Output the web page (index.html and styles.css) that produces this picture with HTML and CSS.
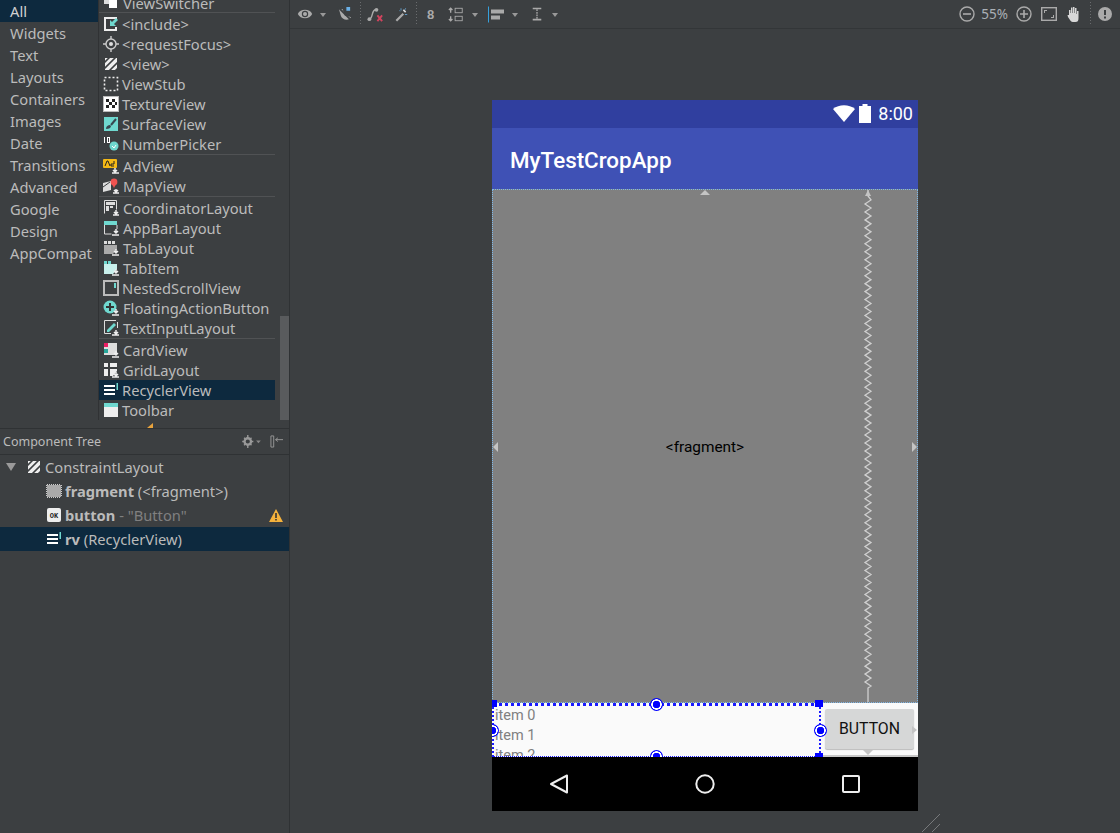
FILE: index.html
```html
<!DOCTYPE html>
<html lang="en">
<head>
<meta charset="utf-8">
<title>MyTestCropApp layout editor</title>
<link rel="stylesheet" href="styles.css">
</head>
<body>
<div class="ide">
  <aside class="side">
    <div class="palette">
      <ul class="cats">
        <li class="cat cat-on">All</li><li class="cat">Widgets</li><li class="cat">Text</li><li class="cat">Layouts</li><li class="cat">Containers</li><li class="cat">Images</li><li class="cat">Date</li><li class="cat">Transitions</li><li class="cat">Advanced</li><li class="cat">Google</li><li class="cat">Design</li><li class="cat">AppCompat</li>
      </ul>
      <div class="list">
        <div class="clip-row"><svg class="ic" viewBox="0 0 16 16"><rect x="1" y="0" width="9" height="8" fill="#ddd"/><rect x="6" y="3" width="8" height="9" fill="#fff"/></svg><span class="clip-text">ViewSwitcher</span></div>
        <div class="group">
          <div class="item"><svg class="ic" viewBox="0 0 16 16"><path d="M1 1h13v3h-2V3H3v10h9v-2h2v4H1z" fill="#eee"/><path d="M13 2L9 6 7 4v6h6L11 8l4-4z" fill="#6fd8cf"/></svg><span>&lt;include&gt;</span></div>
          <div class="item"><svg class="ic" viewBox="0 0 16 16"><circle cx="8" cy="8" r="5" fill="none" stroke="#ccc" stroke-width="1.4"/><circle cx="8" cy="8" r="2" fill="#ddd"/><path d="M8 0v3M8 13v3M0 8h3M13 8h3" stroke="#ccc" stroke-width="1.4"/></svg><span>&lt;requestFocus&gt;</span></div>
          <div class="item"><svg class="ic" viewBox="0 0 16 16"><rect x="2" y="2" width="12" height="12" fill="#eee"/><path d="M0 8L8 0M0 14L14 0M5 16L16 5M11 16L16 11" stroke="#3c3f41" stroke-width="1.6"/></svg><span>&lt;view&gt;</span></div>
          <div class="item"><svg class="ic" viewBox="0 0 16 16"><rect x="1.500" y="1.500" width="13" height="13" fill="none" stroke="#eee" stroke-width="1.600" stroke-dasharray="2 2"/></svg><span>ViewStub</span></div>
          <div class="item"><svg class="ic" viewBox="0 0 16 16"><rect x=".5" y=".5" width="15" height="15" fill="#fff" stroke="#bbb"/><path d="M3 3h3v3H3zM9 3h3v3H9zM6 6h3v3H6zM12 6h2v3h-2zM3 9h3v3H3zM9 9h3v3H9z" fill="#222"/></svg><span>TextureView</span></div>
          <div class="item"><svg class="ic" viewBox="0 0 16 16"><rect x="1" y="1" width="14" height="14" fill="#6fd8cf"/><path d="M13 3L8 9" stroke="#37474f" stroke-width="2"/><path d="M3 13c0-3 2-4 4-4l1 1c0 2-2 3-5 3z" fill="#37474f"/></svg><span>SurfaceView</span></div>
          <div class="item"><svg class="ic" viewBox="0 0 16 16"><circle cx="11" cy="10" r="4.500" fill="#6fd8cf"/><path d="M9 10l2 2 2-3" stroke="#fff" fill="none"/><path d="M1 1h1v6H1zM4 1h3v6H4zM5 2v4h1V2z" fill="#fff"/></svg><span>NumberPicker</span></div>
        </div>
        <div class="group">
          <div class="item item-w"><svg class="ic" viewBox="0 0 16 16"><rect x="0" y="1" width="14" height="9" rx="1" fill="#f5b916"/><path d="M2 8l2-5h1l2 5M8 6h3V3M8 6v2h3" stroke="#222" fill="none"/><path d="M12 10v3M10 12l2 2 2-2M9 15h7" stroke="#eee" fill="none"/></svg><span>AdView</span></div>
          <div class="item item-w"><svg class="ic" viewBox="0 0 16 16"><path d="M0 5l8-2v9l-8 2z" fill="#ddd"/><path d="M0 9l7-5" stroke="#3c3f41"/><circle cx="11" cy="4" r="3.400" fill="#ef5350"/><path d="M9 6l2 4 2-4z" fill="#ef5350"/><path d="M13 11v2M11 12l2 2 2-2M10 15h6" stroke="#eee" fill="none"/></svg><span>MapView</span></div>
        </div>
        <div class="group">
          <div class="item item-w"><svg class="ic" viewBox="0 0 16 16"><path d="M1.500 13.500v-13h12v9" fill="none" stroke="#ddd"/><path d="M3 2h9v3H3zM3 6h3v5H3zM7 6h3v2H7z" fill="#ddd"/><path d="M13 10v3M11 12l2 2 2-2M10 15h6" stroke="#eee" fill="none"/></svg><span>CoordinatorLayout</span></div>
          <div class="item item-w"><svg class="ic" viewBox="0 0 16 16"><rect x="1" y="1" width="13" height="4" fill="#6fd8cf"/><path d="M1.500 5v9h7M14 5v4" stroke="#ddd" fill="none"/><path d="M13 9v4M11 11l2 2 2-2M9 15h7" stroke="#eee" fill="none"/></svg><span>AppBarLayout</span></div>
          <div class="item item-w"><svg class="ic" viewBox="0 0 16 16"><path d="M1 1h3v3H1zM5 1h3v3H5zM9 1h3v3H9z" fill="#ddd"/><path d="M1 5h13v4l-4 5H1z" fill="#aaa"/><path d="M13 9v4M11 11l2 2 2-2M9 15h7" stroke="#eee" fill="none"/></svg><span>TabLayout</span></div>
          <div class="item item-w"><svg class="ic" viewBox="0 0 16 16"><path d="M1 1h3v3H1zM5 1h3v3H5z" fill="#6fd8cf"/><path d="M1 4h13v5l-4 5H1z" fill="#c8f0ec"/><path d="M13 9v4M11 11l2 2 2-2M9 15h7" stroke="#eee" fill="none"/></svg><span>TabItem</span></div>
          <div class="item"><svg class="ic" viewBox="0 0 16 16"><rect x="1" y="1" width="14" height="14" fill="none" stroke="#bbb" stroke-width="2"/><rect x="11" y="3" width="2" height="5" fill="#6fd8cf"/></svg><span>NestedScrollView</span></div>
          <div class="item item-w"><svg class="ic" viewBox="0 0 16 16"><circle cx="7" cy="7" r="6.500" fill="#6fd8cf"/><path d="M7 3v8M3 7h8" stroke="#333" stroke-width="2"/><path d="M13 9v4M11 11l2 2 2-2M9 15h7" stroke="#eee" fill="none"/></svg><span>FloatingActionButton</span></div>
          <div class="item item-w"><svg class="ic" viewBox="0 0 16 16"><path d="M13 .5H1.500v13H8M14.500 2v6" stroke="#ddd" fill="none"/><path d="M11 3L4 10v2h2l7-7z" fill="#6fd8cf"/><path d="M13 10v3M11 12l2 2 2-2M9 15h7" stroke="#eee" fill="none"/></svg><span>TextInputLayout</span></div>
        </div>
        <div class="group">
          <div class="item item-w"><svg class="ic" viewBox="0 0 16 16"><rect x="1" y="1" width="13" height="12" fill="#ddd"/><rect x="1" y="1" width="4" height="4" fill="#e91e63"/><rect x="1" y="7" width="4" height="4" fill="#26a69a"/><path d="M13 9v4M11 11l2 2 2-2M9 15h7" stroke="#eee" fill="none"/></svg><span>CardView</span></div>
          <div class="item item-w"><svg class="ic" viewBox="0 0 16 16"><path d="M1 1h4v4H1zM7 1h7v4H7zM1 7h4v7H1zM7 7h7v2l-4 5H7z" fill="#eee"/><path d="M13 10v3M11 12l2 2 2-2M9 15h7" stroke="#eee" fill="none"/></svg><span>GridLayout</span></div>
          <div class="item item-on"><svg class="ic" viewBox="0 0 16 16"><path d="M1 3h11v2H1zM1 7h11v2H1zM1 11h11v2H1z" fill="#fff"/><rect x="13.500" y="1" width="1.500" height="7" fill="#6fd8cf"/></svg><span>RecyclerView</span></div>
          <div class="item"><svg class="ic" viewBox="0 0 16 16"><rect x="1" y="1" width="14" height="14" fill="#eee"/><rect x="1" y="1" width="14" height="4" fill="#6fd8cf"/></svg><span>Toolbar</span></div>
        </div>
      </div>
      <div class="scrollbar"></div>
    </div>
    <div class="split"><span class="grip"></span></div>
    <header class="tree-head">
      <span>Component Tree</span>
      <div class="tree-tools">
        <svg class="tool-sm" viewBox="0 0 20 14"><circle cx="6" cy="7" r="3.500" fill="none" stroke="#999" stroke-width="2.500"/><path d="M6 0v3M6 11v3M0 7h3M9 7h3M2 3l2 2M8 9l2 2M10 3L8 5M4 9l-2 2" stroke="#999" stroke-width="1.500"/><path d="M15 6h5l-2.500 3z" fill="#888"/></svg>
        <svg class="tool-sm" viewBox="0 0 14 14"><path d="M1 1h3v12H1z" fill="none" stroke="#999"/><path d="M6 5h8M6 5l2.500-2M6 5l2.500 2" stroke="#999"/></svg>
      </div>
    </header>
    <ul class="tree">
      <li class="node node-root"><i class="caret"></i><svg class="ic" viewBox="0 0 16 16"><rect x="2" y="2" width="12" height="12" fill="#eee"/><path d="M0 8L8 0M0 14L14 0M5 16L16 5M11 16L16 11" stroke="#3c3f41" stroke-width="1.6"/></svg><span>ConstraintLayout</span></li>
      <li class="node"><svg class="ic" viewBox="0 0 16 16"><rect x="1" y="2" width="14" height="12" fill="#aaa"/><path d="M1 1.500h14M1 14.500h14M.5 2v12M15.500 2v12" stroke="#ccc" stroke-dasharray="1 1"/></svg><span><b>fragment</b> (&lt;fragment&gt;)</span></li>
      <li class="node"><svg class="ic ic-ok" viewBox="0 0 16 16"><rect x="1" y="1" width="14" height="14" rx="2" fill="#eee"/><text x="8" y="11" class="ok-text">OK</text></svg><span><b>button</b> <em>- "Button"</em></span><svg class="warn" viewBox="0 0 14 13"><path d="M7 0l7 13H0z" fill="#f5b23c"/><path d="M6.200 4h1.600v5H6.200zM6.200 10h1.600v1.500H6.200z" fill="#333"/></svg></li>
      <li class="node node-on"><svg class="ic" viewBox="0 0 16 16"><path d="M1 3h11v2H1zM1 7h11v2H1zM1 11h11v2H1z" fill="#fff"/><rect x="13.500" y="1" width="1.500" height="7" fill="#6fd8cf"/></svg><span><b>rv</b> (RecyclerView)</span></li>
    </ul>
  </aside>
  <main class="work">
    <div class="toolbar">
      <svg class="tb eye" viewBox="0 0 20 14"><path d="M1 7c3-7 15-7 18 0-3 7-15 7-18 0z" fill="#aaa"/><circle cx="10" cy="7" r="4" fill="#3c3f41"/><circle cx="10" cy="7" r="2.500" fill="#aaa"/></svg>
      <i class="drop drop-a"></i>
      <svg class="tb mag" viewBox="0 0 16 16"><path d="M2 2l2 7c1 5 9 6 11 2l-5-2c-1 1-2 0-2-1L6 2z" fill="#aaa"/><rect x="10" y="0" width="4" height="4" fill="#6ab0e6"/><path d="M1 0l14 14" stroke="#3c3f41" stroke-width="2"/></svg>
      <i class="sep sep1"></i>
      <svg class="tb path" viewBox="0 0 18 18"><path d="M2 14c5 0 2-11 8-10" fill="none" stroke="#aaa" stroke-width="1.500"/><circle cx="2.500" cy="14" r="2" fill="#aaa"/><circle cx="10" cy="4" r="2" fill="#aaa"/><path d="M11 10l5 6M16 10l-5 6" stroke="#d0445e" stroke-width="2"/></svg>
      <svg class="tb wand" viewBox="0 0 18 18"><path d="M2 16L11 7l2 2-9 9z" fill="#aaa"/><path d="M12 3l3 3" stroke="#ddd" stroke-width="2"/><path d="M9 1v3M15 1l-1 2M17 9h-3M7 4l1 1" stroke="#6ab0e6"/></svg>
      <i class="sep sep2"></i>
      <span class="tb-num">8</span>
      <svg class="tb grp" viewBox="0 0 18 16"><path d="M3 1v5M1 3l2-2 2 2M3 10v5M1 13l2 2 2-2" stroke="#aaa" fill="none" stroke-width="1.500"/><rect x="8" y="1" width="8" height="5" fill="none" stroke="#aaa"/><rect x="8" y="10" width="8" height="5" fill="none" stroke="#aaa"/></svg>
      <i class="drop drop-b"></i>
      <svg class="tb align" viewBox="0 0 16 16"><rect x="0" y="0" width="1" height="16" fill="#35a0dc"/><rect x="3" y="3" width="13" height="4" fill="#aaa"/><rect x="3" y="9" width="9" height="4" fill="#aaa"/></svg>
      <i class="drop drop-c"></i>
      <svg class="tb baseline" viewBox="0 0 14 16"><path d="M2 1h10M2 14h10" stroke="#aaa" stroke-width="2"/><path d="M7 2v11" stroke="#aaa" stroke-width="1.500" stroke-dasharray="2 1"/></svg>
      <i class="drop drop-d"></i>
      <div class="tb-right">
        <svg class="zoom-ic" viewBox="0 0 16 16"><circle cx="8" cy="8" r="7" fill="none" stroke="#aaa" stroke-width="1.400"/><path d="M4 8h8" stroke="#aaa" stroke-width="1.600"/></svg>
        <span class="pct">55%</span>
        <svg class="zoom-ic" viewBox="0 0 16 16"><circle cx="8" cy="8" r="7" fill="none" stroke="#aaa" stroke-width="1.400"/><path d="M4 8h8M8 4v8" stroke="#aaa" stroke-width="1.600"/></svg>
        <svg class="fit" viewBox="0 0 16 14"><rect x=".7" y=".7" width="14.600" height="12.600" fill="none" stroke="#aaa" stroke-width="1.400"/><path d="M3 3h3v1H4v2H3zM13 11h-3v-1h2V8h1z" fill="#aaa"/></svg>
        <svg class="hand" viewBox="0 0 14 16"><path d="M2 8V4h1.500v3h.5V1.500h1.500V7h.5V1h1.500v6h.5V2h1.500v6h.5V5h1.500v7c0 3-1 4-3 4H6c-2 0-3-2-5-5l-.5-2 1.500 0z" fill="#d8d8d8"/></svg>
        <i class="sep sep3"></i>
        <svg class="info" viewBox="0 0 14 14"><circle cx="7" cy="7" r="7" fill="#aaa"/><path d="M6 3h2v5H6zM6 9.500h2v2H6z" fill="#3c3f41"/></svg>
      </div>
    </div>
    <div class="canvas">
      <div class="phone">
        <div class="status">
          <svg class="wifi" viewBox="0 0 22 17"><path d="M0 4C6-1 16-1 22 4L11 17z" fill="#fff"/></svg>
          <svg class="batt" viewBox="0 0 12 19"><path d="M3.500 0h5v2H12v17H0V2h3.500z" fill="#fff"/></svg>
          <span class="time">8:00</span>
        </div>
        <div class="appbar">MyTestCropApp</div>
        <div class="frag">
          <span class="frag-label">&lt;fragment&gt;</span>
          <i class="arr arr-t"></i><i class="arr arr-l"></i><i class="arr arr-r"></i>
          <svg class="spring" viewBox="0 0 10 514" preserveAspectRatio="none"><path d="M5 0v6L8 10 2 14 8 18 2 22 8 26 2 30 8 34 2 38 8 42 2 46 8 50 2 54 8 58 2 62 8 66 2 70 8 74 2 78 8 82 2 86 8 90 2 94 8 98 2 102 8 106 2 110 8 114 2 118 8 122 2 126 8 130 2 134 8 138 2 142 8 146 2 150 8 154 2 158 8 162 2 166 8 170 2 174 8 178 2 182 8 186 2 190 8 194 2 198 8 202 2 206 8 210 2 214 8 218 2 222 8 226 2 230 8 234 2 238 8 242 2 246 8 250 2 254 8 258 2 262 8 266 2 270 8 274 2 278 8 282 2 286 8 290 2 294 8 298 2 302 8 306 2 310 8 314 2 318 8 322 2 326 8 330 2 334 8 338 2 342 8 346 2 350 8 354 2 358 8 362 2 366 8 370 2 374 8 378 2 382 8 386 2 390 8 394 2 398 8 402 2 406 8 410 2 414 8 418 2 422 8 426 2 430 8 434 2 438 8 442 2 446 8 450 2 454 8 458 2 462 8 466 2 470 8 474 2 478 8 482 2 486 8 490 2 494 8 498 5 500v14" fill="none" stroke="#cfcfcf" stroke-width="1.300"/><path d="M2 6L5 0 8 6z" fill="#c4c4c4"/></svg>
        </div>
        <div class="bottom">
          <div class="rv">
            <div class="rv-item">item 0</div>
            <div class="rv-item">item 1</div>
            <div class="rv-item">item 2</div>
          </div>
          <div class="btn-wrap"><span class="btn">BUTTON</span></div>
          <i class="h-sq sq-tl"></i><i class="h-sq sq-tr"></i><i class="h-sq sq-br"></i>
          <i class="h-c c-t"></i><i class="h-c c-l"></i><i class="h-c c-r"></i><i class="h-c c-b"></i>
          <i class="b-arr b-arr-r"></i><i class="b-arr b-arr-b"></i>
        </div>
        <div class="nav">
          <svg class="nav-ic" viewBox="0 0 20 20"><path d="M18 1.500v17L2 10z" fill="none" stroke="#eee" stroke-width="2" stroke-linejoin="round"/></svg>
          <svg class="nav-ic" viewBox="0 0 20 20"><circle cx="10" cy="10" r="8.700" fill="none" stroke="#eee" stroke-width="2"/></svg>
          <svg class="nav-ic" viewBox="0 0 20 20"><rect x="2" y="2" width="16" height="16" rx="1" fill="none" stroke="#eee" stroke-width="2"/></svg>
        </div>
        <svg class="resize" viewBox="0 0 20 20"><path d="M1 19L19 1M11 19l8-8" stroke="#77797b"/></svg>
      </div>
    </div>
  </main>
</div>
</body>
</html>
```
FILE: styles.css
```css
* { box-sizing: border-box; }
html, body { margin: 0; height: 100%; }
body { background: #3c3f41; color: #bbbbbb; font: 14.700px/20px "Noto Sans", sans-serif; overflow: hidden; }
ul { list-style: none; margin: 0; padding: 0; }
i { display: block; font-style: normal; }
.ide { display: flex; width: 1120px; height: 833px; overflow: hidden; }

/* left column */
.side { width: 290px; flex: none; border-right: 1px solid #2f3234; display: flex; flex-direction: column; }
.palette { height: 420px; display: flex; position: relative; flex: none; overflow: hidden; }
.cats { width: 99px; flex: none; border-right: 1px solid #303234; }
.cat { height: 22px; line-height: 22px; padding-left: 10px; white-space: nowrap; }
.cat-on { background: #0d293e; color: #d0d0d0; }
.list { width: 176px; flex: none; }
.clip-row { height: 12px; display: flex; align-items: flex-end; padding-left: 4px; overflow: hidden; }
.clip-text { margin-left: 4px; position: relative; top: 1px; }
.group { border-top: 1px solid #505254; padding-top: 1px; }
.item { height: 20px; display: flex; align-items: center; padding: 0 0 0 4px; gap: 3px; white-space: nowrap; }
.item span { line-height: 18px; }
.item-w { gap: 4px; }
.item-w svg path:last-child { stroke-width: 1.500; }
.item-on { background: #0d293e; }
.ic { width: 16px; height: 16px; flex: none; display: block; }
.scrollbar { position: absolute; left: 280px; top: 316px; width: 9px; height: 104px; background: #595b5d; }
.split { height: 9px; flex: none; border-bottom: 1px solid #2f3234; position: relative; }
.grip { position: absolute; left: 147px; top: 3px; width: 0; height: 0; border-left: 6px solid transparent; border-bottom: 5px solid #e8a33d; }
.tree-head { height: 26px; flex: none; padding: 0 6px 0 3px; border-bottom: 1px solid #2f3234; display: flex; align-items: center; justify-content: space-between; font-size: 12.500px; }
.tree-tools { display: flex; gap: 9px; align-items: center; }
.tool-sm { height: 13px; width: 13px; display: block; }
.tree-tools svg:first-child { width: 19px; }
.node { height: 24px; display: flex; align-items: center; padding-left: 46px; gap: 3px; white-space: nowrap; position: relative; }
.node b { font-weight: 700; }
.node em { font-style: normal; color: #808080; }
.node-root { padding-left: 6px; gap: 4px; }
.caret { width: 0; height: 0; border-left: 5px solid transparent; border-right: 5px solid transparent; border-top: 8px solid #9a9a9a; margin-right: 6px; }
.node-root span { margin-left: -1px; }
.node-on { background: #0d293e; }
.warn { width: 14px; height: 13px; position: absolute; left: 269px; top: 6px; }
.ok-text { font: 700 7px "Liberation Mono", monospace; text-anchor: middle; fill: #222; }

/* right side */
.work { flex: 1; display: flex; flex-direction: column; min-width: 0; }
.toolbar { height: 29px; flex: none; border-bottom: 1px solid #333638; display: flex; align-items: center; padding: 0 8px 0 7px; }
.tb { display: block; flex: none; height: 17px; }
.drop { width: 0; height: 0; flex: none; border-left: 3.500px solid transparent; border-right: 3.500px solid transparent; border-top: 4px solid #999; margin-top: 2px; }
.sep { width: 1px; height: 24px; flex: none; background-image: linear-gradient(#6a6c6e 50%, transparent 50%); background-size: 1px 3px; }
.eye { width: 16px; height: 14px; }
.drop-a { margin-left: 7px; }
.mag { width: 15px; margin-left: 11px; }
.sep1 { margin-left: 8px; }
.path { width: 17px; margin-left: 6px; }
.wand { width: 14px; margin-left: 10px; }
.sep2 { margin-left: 8px; }
.tb-num { color: #aaa; font: 700 13px "Liberation Sans", sans-serif; margin-left: 10px; width: 7px; }
.grp { width: 16px; margin-left: 14px; }
.drop-b { margin-left: 8px; }
.align { width: 16px; margin-left: 10px; }
.drop-c { margin-left: 8px; }
.baseline { width: 12px; height: 15px; margin-left: 13px; }
.drop-d { margin-left: 9px; }
.tb-right { margin-left: auto; display: flex; align-items: center; }
.zoom-ic { width: 16px; height: 16px; display: block; flex: none; }
.pct { margin: 0 8px 0 6px; font-size: 13.500px; color: #aab0b6; }
.fit { width: 16px; height: 14px; margin-left: 9px; display: block; }
.hand { width: 14px; height: 16px; margin-left: 10px; display: block; }
.sep3 { margin-left: 9px; }
.info { width: 14px; height: 14px; margin-left: 7px; display: block; }
.canvas { flex: 1; padding: 71px 0 0 202px; background: #3c3f41; min-height: 0; }

/* device */
.phone { width: 426px; height: 711px; display: flex; flex-direction: column; position: relative; }
.status { height: 28px; flex: none; background: #303f9f; display: flex; align-items: center; justify-content: flex-end; padding: 0 5px 0 0; color: #fff; }
.wifi { width: 22px; height: 17px; margin: -2px 4px 0 0; display: block; }
.batt { width: 12px; height: 19px; margin: -2px 7px 0 0; display: block; }
.time { font: 18px/28px Roboto, sans-serif; }
.appbar { height: 61px; flex: none; background: #3f51b5; color: #fff; font: 500 22.400px/64px Roboto, sans-serif; padding-left: 18px; }
.frag { height: 514px; flex: none; background: #808080; border: 1px dotted #7fb8e8; position: relative; display: flex; align-items: center; justify-content: center; }
.frag-label { color: #000; font: 15.400px/20px Roboto, sans-serif; position: relative; top: 1px; }
.arr { position: absolute; width: 0; height: 0; }
.arr-t { top: 0; left: 207px; border-left: 5px solid transparent; border-right: 5px solid transparent; border-bottom: 5px solid #c4c4c4; }
.arr-l { left: 0; top: 252px; border-top: 5px solid transparent; border-bottom: 5px solid transparent; border-right: 5px solid #c4c4c4; }
.arr-r { right: 0; top: 252px; border-top: 5px solid transparent; border-bottom: 5px solid transparent; border-left: 5px solid #c4c4c4; }
.spring { position: absolute; left: 370px; top: 0; width: 10px; height: 512px; }
.bottom { height: 54px; flex: none; background: #fafafa; display: flex; position: relative; }
.rv { width: 329px; flex: none; overflow: hidden; border-top: 3px dotted #1a1aff; border-bottom: 1px dotted #1a1aff; border-left: 2px dotted #1a1aff; border-right: 2px dotted #1a1aff; }
.rv-item { height: 20px; color: #808080; font: 14.500px/20px Roboto, sans-serif; margin-left: 1px; }
.btn-wrap { flex: 1; display: flex; align-items: center; padding-left: 4px; border-bottom: 2px solid #c8c8c8; }
.btn { width: 89px; height: 40px; background: #d6d7d7; border-radius: 2px; color: #111; font: 400 15.800px/40px Roboto, sans-serif; text-align: center; box-shadow: 0 1px 1px #bbb; }
.h-sq { position: absolute; background: #0000ff; }
.sq-tl { left: 0; top: -3px; width: 5px; height: 7px; }
.sq-tr { left: 323px; top: -3px; width: 8px; height: 7px; }
.sq-br { left: 323px; top: 50px; width: 8px; height: 4px; }
.h-c { position: absolute; width: 13px; height: 13px; border-radius: 50%; background: radial-gradient(circle, #0000ff 0 3.500px, #fff 4px 5px, #0000ff 5.500px); }
.c-t { left: 158px; top: -5px; }
.c-l { left: -6px; top: 21px; clip-path: inset(0 0 0 6px); }
.c-r { left: 322px; top: 21px; }
.c-b { left: 158px; top: 47px; clip-path: inset(0 0 6px 0); }
.b-arr { position: absolute; width: 0; height: 0; }
.b-arr-r { right: 1px; top: 23px; border-top: 4px solid transparent; border-bottom: 4px solid transparent; border-left: 5px solid #c4c4c4; }
.b-arr-b { left: 371px; top: 47px; border-left: 5px solid transparent; border-right: 5px solid transparent; border-top: 5px solid #c4c4c4; }
.nav { height: 54px; flex: none; background: #000; display: flex; align-items: center; justify-content: space-between; padding: 0 57px; }
.nav-ic { width: 20px; height: 20px; display: block; }
.resize { position: absolute; left: 429px; top: 713px; width: 20px; height: 20px; }
```
